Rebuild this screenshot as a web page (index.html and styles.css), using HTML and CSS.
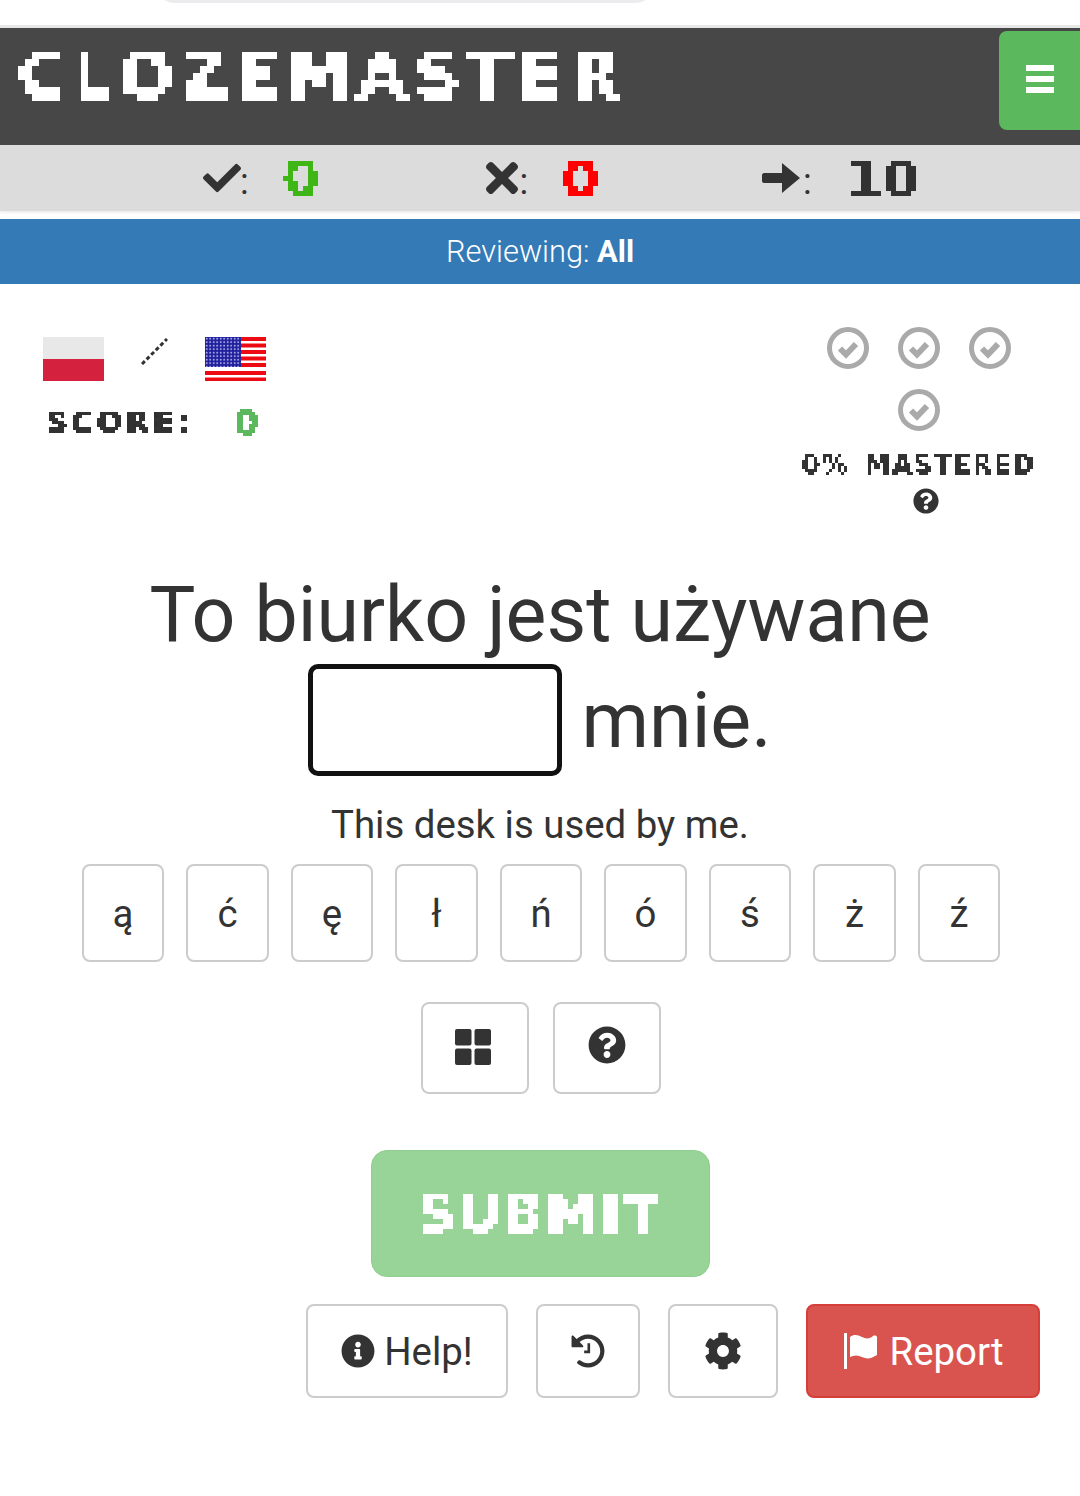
FILE: index.html
```html
<!DOCTYPE html>
<html lang="en">

<head>
  <meta charset="UTF-8">
  <meta name="viewport" content="width=device-width, initial-scale=1.0">
  <title>Clozemaster</title>
  <link rel="stylesheet" href="styles.css">
</head>

<body>
  <!-- pixel look for the retro headings, the text stays real text -->
  <svg class="defs" width="0" height="0">
    <filter id="pixel-7" x="0" y="0" width="100%" height="100%" primitiveUnits="userSpaceOnUse">
      <feFlood x="3" y="3" width="1" height="1" />
      <feComposite width="7" height="7" />
      <feTile result="grid" />
      <feComposite in="SourceGraphic" in2="grid" operator="in" />
      <feMorphology operator="dilate" radius="3" />
      <feComponentTransfer><feFuncA type="discrete" tableValues="0 1" /></feComponentTransfer>
    </filter>
    <filter id="pixel-5" x="0" y="0" width="100%" height="100%" primitiveUnits="userSpaceOnUse">
      <feFlood x="2" y="2" width="1" height="1" />
      <feComposite width="5" height="5" />
      <feTile result="grid" />
      <feComposite in="SourceGraphic" in2="grid" operator="in" />
      <feMorphology operator="dilate" radius="2" />
      <feComponentTransfer><feFuncA type="discrete" tableValues="0 1" /></feComponentTransfer>
    </filter>
    <filter id="pixel-3" x="0" y="0" width="100%" height="100%" primitiveUnits="userSpaceOnUse">
      <feFlood x="1" y="1" width="1" height="1" />
      <feComposite width="3" height="3" />
      <feTile result="grid" />
      <feComposite in="SourceGraphic" in2="grid" operator="in" />
      <feMorphology operator="dilate" radius="1" />
      <feComponentTransfer><feFuncA type="discrete" tableValues="0 1" /></feComponentTransfer>
    </filter>
  </svg>

  <div class="top-strip">
    <div class="search-pill"></div>
  </div>

  <nav class="navbar">
    <span class="logo">CLOZEMASTER</span>
    <button class="menu-btn" aria-label="menu">
      <span></span><span></span><span></span>
    </button>
  </nav>

  <div class="stats">
    <div class="stat">
      <svg class="stat-icon" viewBox="0 0 512 512"><path d="M173.898 439.404l-166.4-166.4c-9.997-9.997-9.997-26.206 0-36.204l36.203-36.204c9.997-9.998 26.207-9.998 36.204 0L192 312.69 432.095 72.596c9.997-9.997 26.207-9.997 36.204 0l36.203 36.204c9.997 9.997 9.997 26.206 0 36.204l-294.4 294.401c-9.998 9.997-26.207 9.997-36.204-.001z" /></svg>
      <span class="colon">:</span>
      <span class="stat-value green">0</span>
    </div>
    <div class="stat">
      <svg class="stat-icon cross" viewBox="0 70 352 372"><path d="M242.72 256l100.07-100.07c12.28-12.28 12.28-32.19 0-44.48l-22.24-22.24c-12.28-12.28-32.19-12.28-44.48 0L176 189.28 75.93 89.21c-12.28-12.28-32.19-12.28-44.48 0L9.21 111.45c-12.28 12.28-12.28 32.19 0 44.48L109.28 256 9.21 356.07c-12.28 12.28-12.28 32.19 0 44.48l22.24 22.24c12.28 12.28 32.2 12.28 44.48 0L176 322.72l100.07 100.07c12.28 12.28 32.2 12.28 44.48 0l22.24-22.24c12.28-12.28 12.28-32.19 0-44.48L242.72 256z" /></svg>
      <span class="colon">:</span>
      <span class="stat-value red">0</span>
    </div>
    <div class="stat">
      <svg class="stat-icon arrow" viewBox="0 0 38 30"><path d="M2 10h18V0l18 15-18 15V20H2c-1 0-2-1-2-2v-6c0-1 1-2 2-2z" /></svg>
      <span class="colon">:</span>
      <span class="stat-value">10</span>
    </div>
  </div>

  <div class="review-bar">Reviewing: <b>All</b></div>

  <section class="info">
    <div class="info-left">
      <div class="flags">
        <svg class="flag" viewBox="0 0 61 44">
          <rect width="61" height="22" fill="#e8e8e8" />
          <rect y="22" width="61" height="22" fill="#d4213d" />
        </svg>
        <svg class="slash" viewBox="0 0 27 27"><path d="M1 26L26 1" stroke="#333" stroke-width="3" stroke-dasharray="4 2.5" /></svg>
        <svg class="flag" viewBox="0 0 61 44">
          <rect width="61" height="44" fill="#fff" />
          <path d="M0 2h61M0 8.500h61M0 15h61M0 21.500h61M0 28h61M0 36h61M0 42.500h61" stroke="#ee0a12" stroke-width="4" />
          <rect width="36" height="30" fill="#1f1f9c" />
          <rect width="36" height="30" fill="url(#stars)" />
          <defs>
            <pattern id="stars" width="3.500" height="3.500" patternUnits="userSpaceOnUse">
              <circle cx="1.700" cy="1.700" r="1" fill="#a9a9e6" />
            </pattern>
          </defs>
        </svg>
      </div>
      <div class="score">
        <span class="score-label">SCORE:</span>
        <span class="score-value">0</span>
      </div>
    </div>

    <div class="info-right">
      <div class="mastery">
        <svg class="ring" viewBox="0 0 42 42"><circle cx="21" cy="21" r="18.500" /><path d="M13 21.500l6 6 10-10.500" /></svg>
        <svg class="ring" viewBox="0 0 42 42"><circle cx="21" cy="21" r="18.500" /><path d="M13 21.500l6 6 10-10.500" /></svg>
        <svg class="ring" viewBox="0 0 42 42"><circle cx="21" cy="21" r="18.500" /><path d="M13 21.500l6 6 10-10.500" /></svg>
        <svg class="ring" viewBox="0 0 42 42"><circle cx="21" cy="21" r="18.500" /><path d="M13 21.500l6 6 10-10.500" /></svg>
      </div>
      <div class="mastered-label">0% MASTERED</div>
      <svg class="small-help" viewBox="0 0 512 512"><path d="M504 256c0 136.997-111.043 248-248 248S8 392.997 8 256C8 119.083 119.043 8 256 8s248 111.083 248 248zM262.655 90c-54.497 0-89.255 22.957-116.549 63.758-3.536 5.286-2.353 12.415 2.715 16.258l34.699 26.31c5.205 3.947 12.621 3.008 16.665-2.122 17.864-22.658 30.113-35.797 57.303-35.797 20.429 0 45.698 13.148 45.698 32.958 0 14.976-12.363 22.667-32.534 33.976C247.128 238.528 216 254.941 216 296v4c0 6.627 5.373 12 12 12h56c6.627 0 12-5.373 12-12v-1.333c0-28.462 83.186-29.647 83.186-106.667 0-58.002-60.165-102-116.531-102zM256 338c-25.365 0-46 20.635-46 46 0 25.364 20.635 46 46 46s46-20.636 46-46c0-25.365-20.635-46-46-46z" /></svg>
    </div>
  </section>

  <main class="question">
    <p class="sentence">To biurko jest używane <span class="blank"></span> mnie.</p>
    <p class="translation">This desk is used by me.</p>

    <div class="keys">
      <button class="btn key">ą</button>
      <button class="btn key">ć</button>
      <button class="btn key">ę</button>
      <button class="btn key">ł</button>
      <button class="btn key">ń</button>
      <button class="btn key">ó</button>
      <button class="btn key">ś</button>
      <button class="btn key">ż</button>
      <button class="btn key">ź</button>
    </div>

    <div class="hints">
      <button class="btn hint">
        <svg class="grid-icon" viewBox="0 0 36 36">
          <rect width="16.500" height="16.500" rx="2" />
          <rect x="19.500" width="16.500" height="16.500" rx="2" />
          <rect y="19.500" width="16.500" height="16.500" rx="2" />
          <rect x="19.500" y="19.500" width="16.500" height="16.500" rx="2" />
        </svg>
      </button>
      <button class="btn hint">
        <svg class="help-icon" viewBox="0 0 512 512"><path d="M504 256c0 136.997-111.043 248-248 248S8 392.997 8 256C8 119.083 119.043 8 256 8s248 111.083 248 248zM262.655 90c-54.497 0-89.255 22.957-116.549 63.758-3.536 5.286-2.353 12.415 2.715 16.258l34.699 26.31c5.205 3.947 12.621 3.008 16.665-2.122 17.864-22.658 30.113-35.797 57.303-35.797 20.429 0 45.698 13.148 45.698 32.958 0 14.976-12.363 22.667-32.534 33.976C247.128 238.528 216 254.941 216 296v4c0 6.627 5.373 12 12 12h56c6.627 0 12-5.373 12-12v-1.333c0-28.462 83.186-29.647 83.186-106.667 0-58.002-60.165-102-116.531-102zM256 338c-25.365 0-46 20.635-46 46 0 25.364 20.635 46 46 46s46-20.636 46-46c0-25.365-20.635-46-46-46z" /></svg>
      </button>
    </div>

    <button class="submit"><span class="submit-text">SUBMIT</span></button>

    <div class="actions">
      <button class="btn action help">
        <svg class="action-icon" viewBox="0 0 512 512"><path d="M256 8C119.043 8 8 119.083 8 256c0 136.997 111.043 248 248 248s248-111.003 248-248C504 119.083 392.957 8 256 8zm0 110c23.196 0 42 18.804 42 42s-18.804 42-42 42-42-18.804-42-42 18.804-42 42-42zm56 254c0 6.627-5.373 12-12 12h-88c-6.627 0-12-5.373-12-12v-24c0-6.627 5.373-12 12-12h12v-64h-12c-6.627 0-12-5.373-12-12v-24c0-6.627 5.373-12 12-12h64c6.627 0 12 5.373 12 12v100h12c6.627 0 12 5.373 12 12v24z" /></svg>
        Help!
      </button>
      <button class="btn action history">
        <svg class="action-icon" viewBox="0 0 512 512"><path d="M504 255.531c.253 136.64-111.18 248.372-247.82 248.468-59.015.042-113.223-20.53-155.822-54.911-11.077-8.94-11.905-25.541-1.839-35.607l11.267-11.267c8.609-8.609 22.353-9.551 31.891-1.984C173.062 425.135 212.781 440 256 440c101.705 0 184-82.311 184-184 0-101.705-82.311-184-184-184-48.814 0-93.149 18.969-126.068 49.932l50.754 50.754c10.08 10.08 2.941 27.314-11.313 27.314H24c-8.837 0-16-7.163-16-16V38.627c0-14.254 17.234-21.393 27.314-11.314l49.372 49.372C129.209 34.136 189.552 8 256 8c136.81 0 247.747 110.78 248 247.531zM288 140v150h-90v-40h50V140z" /></svg>
      </button>
      <button class="btn action settings">
        <svg class="gear-icon" viewBox="0 0 512 512"><path d="M487.4 315.7l-42.6-24.6c4.3-23.2 4.3-47 0-70.2l42.6-24.6c4.9-2.8 7.1-8.6 5.500-14-11.100-35.600-30-67.800-54.700-94.600-3.800-4.100-10-5.100-14.800-2.300L380.800 110c-17.900-15.400-38.500-27.300-60.800-35.100V25.800c0-5.600-3.900-10.500-9.400-11.700-36.700-8.200-74.300-7.800-109.200 0-5.500 1.200-9.400 6.100-9.400 11.700V75c-22.200 7.900-42.800 19.800-60.800 35.100L88.700 85.500c-4.900-2.800-11-1.900-14.800 2.300-24.700 26.700-43.600 58.900-54.700 94.600-1.700 5.400.6 11.200 5.500 14L67.300 221c-4.300 23.200-4.300 47 0 70.200l-42.600 24.600c-4.900 2.800-7.100 8.600-5.500 14 11.100 35.600 30 67.800 54.700 94.600 3.800 4.100 10 5.100 14.800 2.300l42.600-24.600c17.900 15.400 38.500 27.300 60.800 35.100v49.200c0 5.600 3.900 10.500 9.400 11.700 36.700 8.200 74.300 7.800 109.200 0 5.500-1.200 9.400-6.100 9.400-11.700v-49.200c22.200-7.900 42.800-19.800 60.800-35.100l42.600 24.600c4.900 2.800 11 1.900 14.800-2.300 24.700-26.700 43.600-58.900 54.700-94.600 1.500-5.500-.7-11.300-5.600-14.100zM256 336c-44.100 0-80-35.900-80-80s35.900-80 80-80 80 35.900 80 80-35.900 80-80 80z" /></svg>
      </button>
      <button class="btn action report">
        <svg class="flag-icon" viewBox="0 0 36 36"><path d="M1 0h3v36H1zM7 4c4-3 8-2 12 0s8 2 11-1c2-1 4 0 4 1v17c0 1-1 2-2 2-4 3-9 3-13 1s-8-2-12 0z" /></svg>
        Report
      </button>
    </div>
  </main>
</body>

</html>
```

FILE: styles.css
```css
* {
  box-sizing: border-box;
}

body {
  margin: 0;
  background: #fff;
  color: #333;
  font-family: Roboto, "Liberation Sans", sans-serif;
}

.defs {
  position: absolute;
}

button {
  font-family: inherit;
  cursor: pointer;
}

/* Top of the page */
.top-strip {
  height: 25px;
  overflow: hidden;
}

.search-pill {
  width: 500px;
  height: 40px;
  margin: -37px 0 0 155px;
  background: #ececef;
  border-radius: 24px;
}

.navbar {
  height: 120px;
  display: flex;
  justify-content: space-between;
  align-items: flex-start;
  padding: 3px 0 0 18px;
  background: #474747;
  border-top: 3px solid #e7e7e7;
}

.logo {
  margin-top: 7px;
  font-family: "DejaVu Sans", sans-serif;
  font-weight: bold;
  font-size: 64px;
  line-height: 76px;
  letter-spacing: 7.6px;
  color: #fff;
  white-space: nowrap;
  -webkit-text-stroke: 1px #fff;
  filter: url(#pixel-7);
}

.menu-btn {
  width: 81px;
  height: 99px;
  padding: 0 0 4px;
  display: flex;
  flex-direction: column;
  align-items: center;
  justify-content: center;
  gap: 5px;
  background: #5cb85c;
  border: 0;
  border-radius: 8px 0 0 8px;
}

.menu-btn span {
  width: 28px;
  height: 6px;
  background: #fff;
}

/* Counters */
.stats {
  height: 66px;
  display: flex;
  align-items: center;
  padding-left: 202px;
  background: #dcdcdc;
  box-shadow: 0 2px 2px #eee;
}

.stat {
  width: 281.5px;
  display: flex;
  align-items: center;
}

.stat-icon {
  width: 40px;
  height: 38px;
  margin-right: -2px;
  fill: #333;
}

.cross {
  width: 32px;
  height: 34px;
  margin: 0 2px 0 2px;
}

.arrow {
  width: 38px;
  margin: 0 3px 0 -3px;
}

.colon {
  width: 43px;
  padding-top: 8px;
  font-size: 36px;
  line-height: 40px;
}

.stat-value {
  margin-top: 2px;
  font-family: "DejaVu Sans", sans-serif;
  font-weight: bold;
  font-size: 52px;
  line-height: 56px;
  letter-spacing: 1px;
  filter: url(#pixel-5);
}

.green {
  color: #3cb616;
}

.red {
  color: #f00;
}

.review-bar {
  height: 65px;
  margin-top: 8px;
  background: #337ab7;
  color: #fff;
  font-size: 30.8px;
  font-weight: 300;
  line-height: 65px;
  text-align: center;
}

.review-bar b {
  font-weight: 700;
}

/* Flags, score, mastery */
.info {
  height: 244px;
  display: flex;
  justify-content: space-between;
  padding: 43px 41px 0 43px;
}

.flags {
  display: flex;
  align-items: center;
  gap: 37px;
  margin-top: 10px;
}

.flag {
  width: 61px;
  height: 44px;
}

.slash {
  width: 27px;
  height: 27px;
  margin-top: -15px;
}

.score {
  display: flex;
  align-items: center;
  margin: 22px 0 0 3px;
  font-family: "DejaVu Sans", sans-serif;
  font-weight: bold;
}

.score-label {
  width: 188px;
  font-size: 30px;
  line-height: 40px;
  letter-spacing: 3.6px;
  -webkit-text-stroke: 0.6px #333;
  filter: url(#pixel-3);
}

.score-value {
  font-size: 36px;
  line-height: 40px;
  color: #5cb85c;
  filter: url(#pixel-3);
}

.info-right {
  width: 240px;
  display: flex;
  flex-direction: column;
  align-items: center;
}

.mastery {
  display: flex;
  flex-wrap: wrap;
  justify-content: center;
  gap: 20px 29px;
  width: 240px;
}

.ring {
  width: 42px;
  height: 42px;
  fill: none;
  stroke: #aaa;
  stroke-width: 5;
}

.ring path {
  stroke-width: 6;
}

.mastered-label {
  margin-top: 17px;
  font-family: "DejaVu Sans", sans-serif;
  font-weight: bold;
  font-size: 26px;
  line-height: 34px;
  letter-spacing: 1.5px;
  word-spacing: 5px;
  white-space: nowrap;
  filter: url(#pixel-3);
}

.small-help {
  width: 26px;
  height: 26px;
  margin: 6px 0 0 14px;
  fill: #333;
}

/* Question */
.question {
  display: flex;
  flex-direction: column;
  align-items: center;
}

.sentence {
  width: 1000px;
  margin: 34px 0 0;
  font-size: 77px;
  line-height: 106px;
  text-align: center;
}

.blank {
  display: inline-block;
  width: 254px;
  height: 112px;
  margin: -20px 0 -6px 0;
  vertical-align: middle;
  border: 5px solid #111;
  border-radius: 10px;
}

.translation {
  margin: 29px 0 0;
  font-size: 38.4px;
  line-height: 44px;
}

.btn {
  background: #fff;
  color: #333;
  border: 2px solid #ccc;
  border-radius: 8px;
  padding: 0;
}

.keys {
  display: flex;
  gap: 22px;
  margin: 17px 0 0 2px;
}

.key {
  width: 82.5px;
  height: 98px;
  font-size: 38.4px;
}

.hints {
  display: flex;
  gap: 24px;
  margin: 40px 0 0 2px;
}

.hint {
  width: 108px;
  height: 92px;
}

.grid-icon {
  width: 36px;
  height: 36px;
  margin-right: 4px;
  fill: #333;
}

.help-icon {
  width: 38px;
  height: 38px;
  margin-bottom: 4px;
  fill: #333;
}

.submit {
  width: 339px;
  height: 127px;
  margin-top: 56px;
  background: #98d398;
  border: 1px solid #8fce8f;
  border-radius: 16px;
}

.submit-text {
  display: inline-block;
  font-family: "DejaVu Sans", sans-serif;
  font-weight: bold;
  font-size: 52px;
  line-height: 60px;
  letter-spacing: 3px;
  color: #fff;
  -webkit-text-stroke: 1px #fff;
  filter: url(#pixel-5);
}

.actions {
  display: flex;
  gap: 28px;
  align-self: flex-end;
  margin: 27px 40px 0 0;
}

.action {
  height: 94px;
  font-size: 38.4px;
  display: flex;
  align-items: center;
  justify-content: center;
  gap: 9px;
}

.help {
  width: 202px;
}

.history {
  width: 104px;
}

.settings {
  width: 110px;
}

.report {
  width: 234px;
  gap: 11px;
  background: #d9534f;
  border-color: #d43f3a;
  color: #fff;
}

.action-icon {
  width: 34px;
  height: 34px;
  fill: #333;
}

.gear-icon {
  width: 38px;
  height: 38px;
  fill: #333;
}

.flag-icon {
  width: 36px;
  height: 36px;
  fill: #fff;
}
```
